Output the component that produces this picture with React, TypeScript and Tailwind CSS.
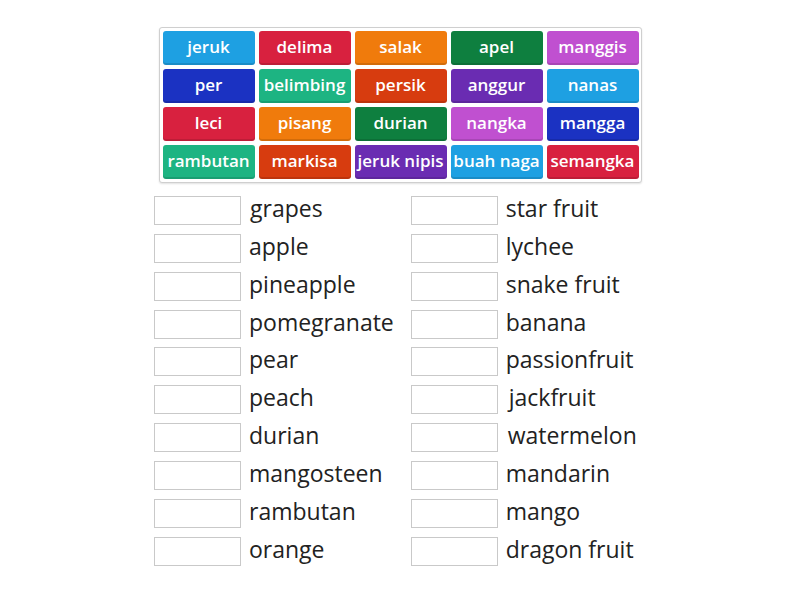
const tiles: { label: string; color: string }[] = [
  { label: "jeruk", color: "bg-[#1ea0e2]" },
  { label: "delima", color: "bg-[#d8213f]" },
  { label: "salak", color: "bg-[#f07b0c]" },
  { label: "apel", color: "bg-[#0e7f3f]" },
  { label: "manggis", color: "bg-[#c050d0]" },
  { label: "per", color: "bg-[#1b32c2]" },
  { label: "belimbing", color: "bg-[#1db482]" },
  { label: "persik", color: "bg-[#d73c0f]" },
  { label: "anggur", color: "bg-[#6a2cb2]" },
  { label: "nanas", color: "bg-[#1ea0e2]" },
  { label: "leci", color: "bg-[#d8213f]" },
  { label: "pisang", color: "bg-[#f07b0c]" },
  { label: "durian", color: "bg-[#0e7f3f]" },
  { label: "nangka", color: "bg-[#c050d0]" },
  { label: "mangga", color: "bg-[#1b32c2]" },
  { label: "rambutan", color: "bg-[#1db482]" },
  { label: "markisa", color: "bg-[#d73c0f]" },
  { label: "jeruk nipis", color: "bg-[#6a2cb2]" },
  { label: "buah naga", color: "bg-[#1ea0e2]" },
  { label: "semangka", color: "bg-[#d8213f]" },
];

const left = [
  "grapes",
  "apple",
  "pineapple",
  "pomegranate",
  "pear",
  "peach",
  "durian",
  "mangosteen",
  "rambutan",
  "orange",
];

const right = [
  "star fruit",
  "lychee",
  "snake fruit",
  "banana",
  "passionfruit",
  "jackfruit",
  "watermelon",
  "mandarin",
  "mango",
  "dragon fruit",
];

function Slot({ word, shift }: { word: string; shift?: string }) {
  return (
    <div className="flex h-[29px] items-center">
      <div className="h-[29px] w-[87px] shrink-0 border border-[#c9c9c9] bg-white" />
      <span className={`mt-[-4px] whitespace-nowrap text-[23px] leading-none text-[#222] ${shift ?? "ml-[8px]"}`}>
        {word}
      </span>
    </div>
  );
}

export default function App() {
  return (
    <div
      className="min-h-[600px] w-[800px] bg-white pt-[27px]"
      style={{ fontFamily: '"Open Sans", "Liberation Sans", sans-serif' }}
    >
      <div className="mx-auto w-[483px] rounded-[3px] border border-[#cfcfcf] bg-white p-[3px] shadow-[0_1px_2px_rgba(0,0,0,0.12)]">
        <div className="grid grid-cols-[repeat(5,92px)] gap-[4px]">
          {tiles.map((t) => (
            <div
              key={t.label}
              className={`flex h-[34px] items-center justify-center rounded-[3px] pb-[2px] text-[17px] font-semibold whitespace-nowrap text-white shadow-[inset_0_-2px_0_rgba(0,0,0,0.12)] ${t.color}`}
            >
              {t.label}
            </div>
          ))}
        </div>
      </div>

      <div className="mx-auto mt-[13px] grid w-[492px] grid-cols-[256.7px_1fr]">
        <div className="flex flex-col gap-[8.85px]">
          {left.map((w, i) => (
            <Slot key={w} word={w} shift={i === 0 ? "ml-[9px]" : "ml-[8px]"} />
          ))}
        </div>
        <div className="flex flex-col gap-[8.85px]">
          {right.map((w) => (
            <Slot
              key={w}
              word={w}
              shift={w === "jackfruit" ? "ml-[11px]" : w === "watermelon" ? "ml-[10px]" : "ml-[8px]"}
            />
          ))}
        </div>
      </div>
    </div>
  );
}
